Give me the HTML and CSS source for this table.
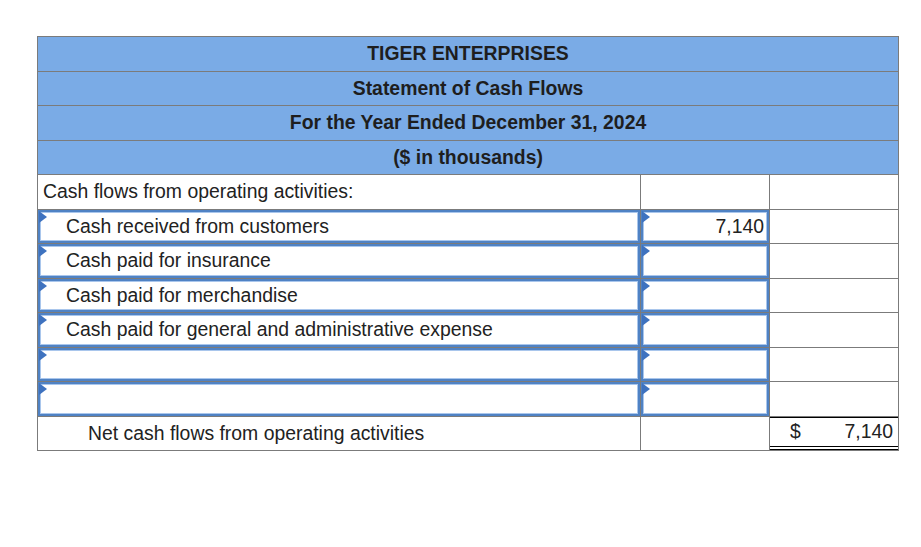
FILE: index.html
```html
<!DOCTYPE html>
<html>
<head>
<meta charset="utf-8">
<link rel="stylesheet" href="styles.css">
</head>
<body>
<div class="page">
<table class="sheet">
  <colgroup><col class="c1"><col class="c2"><col class="c3"></colgroup>
  <tr class="hd"><td colspan="3">TIGER ENTERPRISES</td></tr>
  <tr class="hd"><td colspan="3">Statement of Cash Flows</td></tr>
  <tr class="hd"><td colspan="3">For the Year Ended December 31, 2024</td></tr>
  <tr class="hd"><td colspan="3">($ in thousands)</td></tr>
  <tr><td class="lbl">Cash flows from operating activities:</td><td></td><td></td></tr>
  <tr>
    <td class="in"><div class="box"><span class="mk"></span><span class="ind">Cash received from customers</span></div></td>
    <td class="in"><div class="box num"><span class="mk"></span>7,140</div></td>
    <td></td>
  </tr>
  <tr>
    <td class="in"><div class="box"><span class="mk"></span><span class="ind">Cash paid for insurance</span></div></td>
    <td class="in"><div class="box num"><span class="mk"></span></div></td>
    <td></td>
  </tr>
  <tr>
    <td class="in"><div class="box"><span class="mk"></span><span class="ind">Cash paid for merchandise</span></div></td>
    <td class="in"><div class="box num"><span class="mk"></span></div></td>
    <td></td>
  </tr>
  <tr>
    <td class="in"><div class="box"><span class="mk"></span><span class="ind">Cash paid for general and administrative expense</span></div></td>
    <td class="in"><div class="box num"><span class="mk"></span></div></td>
    <td></td>
  </tr>
  <tr>
    <td class="in"><div class="box"><span class="mk"></span></div></td>
    <td class="in"><div class="box num"><span class="mk"></span></div></td>
    <td></td>
  </tr>
  <tr>
    <td class="in"><div class="box"><span class="mk"></span></div></td>
    <td class="in"><div class="box num"><span class="mk"></span></div></td>
    <td></td>
  </tr>
  <tr>
    <td class="lbl net">Net cash flows from operating activities</td>
    <td></td>
    <td class="tot"><div class="totbox"><span>$</span><span>7,140</span></div></td>
  </tr>
</table>
</div>
</body>
</html>
```
FILE: styles.css
```css
html, body { margin: 0; padding: 0; background: #fff; }
body { font-family: "Liberation Sans", Arial, sans-serif; color: #222; }
.page { padding: 36px 0 0 37px; }
.sheet {
  border-collapse: collapse;
  table-layout: fixed;
  width: 861px;
  font-size: 19.4px;
}
.c1 { width: 603px; }
.c2 { width: 129px; }
.c3 { width: 129px; }
.sheet td {
  border: 1px solid #7b7b7b;
  height: 33.5px;
  padding: 0;
  vertical-align: middle;
  white-space: nowrap;
}
.hd td {
  background: #7aabe6;
  text-align: center;
  font-weight: bold;
  color: #1e1e1e;
}
.lbl { padding-left: 5px !important; }
.net { padding-left: 50px !important; }
.sheet td.in { padding: 0; }
.box {
  position: relative;
  box-sizing: border-box;
  height: 33.5px;
  border: 2px solid #4f82c4;
  box-shadow: inset 0 0 0 1px #a9c6ec;
  display: flex;
  align-items: center;
}
.box.num { justify-content: flex-end; padding-right: 3px; }
.ind { padding-left: 26px; }
.mk {
  position: absolute;
  left: -1px;
  top: -1px;
  width: 0;
  height: 0;
  border-top: 6px solid transparent;
  border-bottom: 6px solid transparent;
  border-left: 8px solid #3e72bf;
}
.tot { padding: 0 !important; }
.totbox {
  box-sizing: border-box;
  height: 33.5px;
  border-top: 1px solid #000;
  border-bottom: 4px double #000;
  display: flex;
  justify-content: space-between;
  align-items: center;
  padding: 0 5px 0 20px;
}
```
